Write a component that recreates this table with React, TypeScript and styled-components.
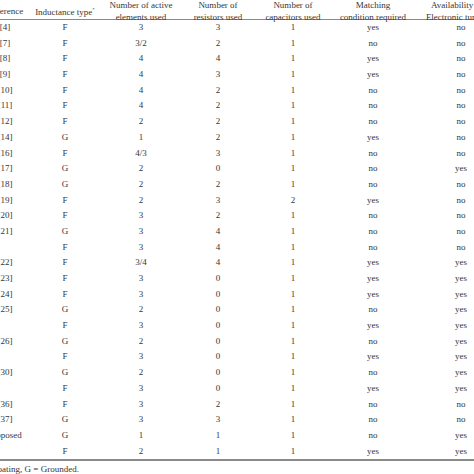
import styled, { createGlobalStyle } from "styled-components";

const GlobalStyle = createGlobalStyle`
  html, body {
    margin: 0;
    padding: 0;
    background: #ffffff;
    overflow: hidden;
  }
  body {
    font-family: "Liberation Serif", "Times New Roman", serif;
    color: #363636;
  }
`;

const columns = "60px 60px 92px 62px 88px 72px 104px";

const Sheet = styled.div`
  width: 538px;
  margin-left: -25px;
  font-size: 9px;
`;

const HeaderRow = styled.div`
  display: grid;
  grid-template-columns: ${columns};
  height: 20px;
  margin-top: -1px;
  border-bottom: 1.5px solid #8a8a8a;
`;

const HeadCell = styled.div<{ $offset?: number }>`
  display: flex;
  flex-direction: column;
  align-items: center;
  justify-content: center;
  text-align: center;
  line-height: 12px;
  white-space: nowrap;
  transform: translateX(${(p) => p.$offset ?? 0}px);
`;

const Star = styled.sup`
  font-size: 5px;
  vertical-align: 4px;
`;

const Body = styled.div`
  border-bottom: 2px solid #8a8a8a;
`;

const Row = styled.div`
  display: grid;
  grid-template-columns: ${columns};
  height: 15.7px;
  align-items: center;
`;

const Cell = styled.div`
  text-align: center;
  white-space: nowrap;
  line-height: 15.7px;
`;

const Note = styled.div`
  margin-left: -4px;
  margin-top: 3px;
  white-space: nowrap;
`;

type Entry = [string, string, string, string, string, string, string];

const rows: Entry[] = [
  ["[4]", "F", "3", "3", "1", "yes", "no"],
  ["[7]", "F", "3/2", "2", "1", "no", "no"],
  ["[8]", "F", "4", "4", "1", "yes", "no"],
  ["[9]", "F", "4", "3", "1", "yes", "no"],
  ["[10]", "F", "4", "2", "1", "no", "no"],
  ["[11]", "F", "4", "2", "1", "no", "no"],
  ["[12]", "F", "2", "2", "1", "no", "no"],
  ["[14]", "G", "1", "2", "1", "yes", "no"],
  ["[16]", "F", "4/3", "3", "1", "no", "no"],
  ["[17]", "G", "2", "0", "1", "no", "yes"],
  ["[18]", "G", "2", "2", "1", "no", "no"],
  ["[19]", "F", "2", "3", "2", "yes", "no"],
  ["[20]", "F", "3", "2", "1", "no", "no"],
  ["[21]", "G", "3", "4", "1", "no", "no"],
  ["", "F", "3", "4", "1", "no", "no"],
  ["[22]", "F", "3/4", "4", "1", "yes", "yes"],
  ["[23]", "F", "3", "0", "1", "yes", "yes"],
  ["[24]", "F", "3", "0", "1", "yes", "yes"],
  ["[25]", "G", "2", "0", "1", "no", "yes"],
  ["", "F", "3", "0", "1", "yes", "yes"],
  ["[26]", "G", "2", "0", "1", "no", "yes"],
  ["", "F", "3", "0", "1", "yes", "yes"],
  ["[30]", "G", "2", "0", "1", "no", "yes"],
  ["", "F", "3", "0", "1", "yes", "yes"],
  ["[36]", "F", "3", "2", "1", "no", "no"],
  ["[37]", "G", "3", "3", "1", "no", "no"],
  ["Proposed", "G", "1", "1", "1", "no", "yes"],
  ["", "F", "2", "1", "1", "yes", "yes"],
];

export default function App() {
  return (
    <>
      <GlobalStyle />
      <Sheet>
        <HeaderRow>
          <HeadCell>Reference</HeadCell>
          <HeadCell>
            <span>
              Inductance type<Star>*</Star>
            </span>
          </HeadCell>
          <HeadCell>
            <span>Number of active</span>
            <span>elements used</span>
          </HeadCell>
          <HeadCell>
            <span>Number of</span>
            <span>resistors used</span>
          </HeadCell>
          <HeadCell>
            <span>Number of</span>
            <span>capacitors used</span>
          </HeadCell>
          <HeadCell>
            <span>Matching</span>
            <span>condition required</span>
          </HeadCell>
          <HeadCell $offset={-4}>
            <span>Availability of</span>
            <span>Electronic tuning</span>
          </HeadCell>
        </HeaderRow>
        <Body>
          {rows.map((r, i) => (
            <Row key={i}>
              {r.map((v, j) => (
                <Cell key={j}>{v}</Cell>
              ))}
            </Row>
          ))}
        </Body>
        <Note>*F = Floating, G = Grounded.</Note>
      </Sheet>
    </>
  );
}
